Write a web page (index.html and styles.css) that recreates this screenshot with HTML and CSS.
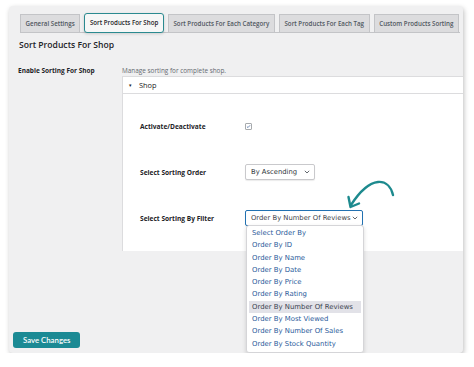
FILE: index.html
```html
<!DOCTYPE html>
<html lang="en">
<head>
    <meta charset="UTF-8">
    <meta name="viewport" content="width=device-width, initial-scale=1.0">
    <title>Sort Products For Shop</title>
    <link rel="stylesheet" href="styles.css">
</head>
<body>
    <div class="card">
        <!-- Tabs -->
        <div class="tabs">
            <a class="tab">General Settings</a>
            <a class="tab active">Sort Products For Shop</a>
            <a class="tab">Sort Products For Each Category</a>
            <a class="tab">Sort Products For Each Tag</a>
            <a class="tab">Custom Products Sorting</a>
        </div>

        <h2 class="page-title">Sort Products For Shop</h2>

        <!-- Settings row -->
        <div class="setting">
            <div class="setting-label">Enable Sorting For Shop</div>
            <div class="setting-body">
                <p class="description">Manage sorting for complete shop.</p>
                <div class="panel">
                    <div class="panel-head"><span class="caret">&#9662;</span> Shop</div>
                    <div class="panel-row row-check">
                        <div class="row-label">Activate/Deactivate</div>
                        <span class="checkbox">
                            <svg width="7" height="7" viewBox="0 0 7 7"><path d="M1.3 3.6 L2.8 5 L5.7 1.8" fill="none" stroke="#3a5f9a" stroke-width="1"/></svg>
                        </span>
                    </div>
                    <div class="panel-row">
                        <div class="row-label">Select Sorting Order</div>
                        <div class="select">By Ascending
                            <svg class="chev" width="6" height="4" viewBox="0 0 6 4"><path d="M0.8 0.8 L3 3 L5.2 0.8" fill="none" stroke="#50575e" stroke-width="0.9"/></svg>
                        </div>
                    </div>
                    <div class="panel-row">
                        <div class="row-label">Select Sorting By Filter</div>
                        <div class="select-wrap">
                            <div class="select open">Order By Number Of Reviews
                                <svg class="chev" width="6" height="4" viewBox="0 0 6 4"><path d="M0.8 0.8 L3 3 L5.2 0.8" fill="none" stroke="#50575e" stroke-width="0.9"/></svg>
                            </div>
                            <ul class="dropdown">
                                <li>Select Order By</li>
                                <li>Order By ID</li>
                                <li>Order By Name</li>
                                <li>Order By Date</li>
                                <li>Order By Price</li>
                                <li>Order By Rating</li>
                                <li class="hover">Order By Number Of Reviews</li>
                                <li>Order By Most Viewed</li>
                                <li>Order By Number Of Sales</li>
                                <li>Order By Stock Quantity</li>
                            </ul>
                        </div>
                    </div>
                </div>
            </div>
        </div>

        <div class="footer">
            <button class="save">Save Changes</button>
        </div>
    </div>

    <!-- annotation arrow -->
    <svg class="arrow" width="60" height="40" viewBox="340 175 60 40">
        <path d="M393 195 C389 178 371 174 351 205" fill="none" stroke="#1d8a8e" stroke-width="2.4" stroke-linecap="round"/>
        <path d="M348.5 197 L350.5 207 L359 203.5" fill="none" stroke="#1d8a8e" stroke-width="2.4" stroke-linecap="round" stroke-linejoin="round"/>
    </svg>
</body>
</html>
```

FILE: styles.css
```css
body {
    margin: 0;
    background: #ffffff;
    font-family: 'Open Sans', sans-serif;
    color: #1d2327;
}

/* Main card */
.card {
    margin: 6px 0 0 9px;
    width: 454px;
    height: 347px;
    background-color: #f0f0f1;
    border-radius: 4px;
    box-shadow: 1px 2px 5px rgba(0, 0, 0, 0.25);
    display: flex;
    flex-direction: column;
    overflow: hidden;
}

/* Tabs */
.tabs {
    display: flex;
    align-items: flex-end;
    margin: 7px 3px 0 11px;
    border-bottom: 1px solid #c3c4c7;
    height: 19px;
}

.tab {
    height: 17px;
    line-height: 17px;
    padding: 0 4.6px;
    margin-right: 4px;
    background-color: #dcdcde;
    border: 1px solid #c3c4c7;
    border-bottom: none;
    font-size: 6.2px;
    font-weight: 600;
    color: #50575e;
    white-space: nowrap;
}

.tab.active {
    height: 18px;
    line-height: 18px;
    background-color: #f6f7f7;
    border: 1px solid #2a8a90;
    border-radius: 3px;
    color: #1d2327;
    margin-bottom: -1px;
    box-shadow: 0 1px 3px rgba(0, 0, 0, 0.15);
}

.page-title {
    margin: 6px 0 0 10px;
    font-size: 8.6px;
    font-weight: 600;
    line-height: 12px;
}

/* Setting row */
.setting {
    display: flex;
    margin-top: 14px;
}

.setting-label {
    width: 104px;
    padding-left: 9px;
    font-size: 6.5px;
    font-weight: 700;
    line-height: 12px;
}

.setting-body {
    flex: 1;
}

.description {
    margin: 0;
    font-size: 6.4px;
    color: #646970;
    line-height: 11px;
}

.panel {
    background: #ffffff;
    border-top: 1px solid #dcdcde;
    border-left: 1px solid #dcdcde;
    height: 174px;
}

.panel-head {
    height: 16px;
    line-height: 16px;
    padding-left: 6px;
    font-size: 7.4px;
    border-bottom: 1px solid #dcdcde;
}

.caret {
    font-size: 5px;
    margin-right: 5px;
    vertical-align: 1px;
}

.panel-row {
    display: flex;
    align-items: center;
    height: 46px;
    padding-left: 17px;
}

.row-check {
    margin-top: 9px;
}

.row-label {
    width: 105px;
    font-size: 6.6px;
    font-weight: 700;
}

.checkbox {
    display: flex;
    align-items: center;
    justify-content: center;
    width: 7px;
    height: 7px;
    border: 1px solid #a7aaad;
    border-radius: 1px;
    background: #fff;
    box-sizing: border-box;
}

.select {
    display: flex;
    align-items: center;
    height: 16px;
    box-sizing: border-box;
    padding: 0 4px 0 5px;
    border: 1px solid #c9c9cc;
    border-radius: 2px;
    font-family: 'DejaVu Sans', sans-serif;
    font-size: 6.8px;
    color: #2c3338;
    background: #fff;
    box-shadow: 0 1px 1px rgba(0, 0, 0, 0.08);
    white-space: nowrap;
}

.select .chev {
    margin-left: 7px;
}

.select.open .chev {
    margin-left: 2px;
}

.select-wrap {
    position: relative;
}

.select.open {
    border-color: #2271b1;
    color: #3c434a;
}

.dropdown {
    position: absolute;
    top: 15px;
    left: 1px;
    width: 118px;
    margin: 0;
    padding: 1px 0 2px;
    list-style: none;
    background: #ffffff;
    border: 1px solid #d5d5d8;
    border-radius: 3px;
    box-shadow: 0 2px 4px rgba(0, 0, 0, 0.15);
    box-sizing: border-box;
}

.dropdown li {
    height: 12.3px;
    line-height: 12.3px;
    padding-left: 3px;
    margin: 0 2px;
    font-family: 'DejaVu Sans', sans-serif;
    font-size: 6.9px;
    color: #2a5a9a;
    white-space: nowrap;
}

.dropdown li.hover {
    background-color: #e2e2e8;
    color: #3a4350;
}

/* Footer */
.footer {
    margin-top: auto;
    padding: 0 0 5px 4px;
}

.save {
    height: 16px;
    padding: 0 10px;
    border: none;
    border-radius: 3px;
    background-color: #1b8a94;
    color: #ffffff;
    font-family: 'Lato', sans-serif;
    font-size: 7.8px;
    font-weight: 600;
}

/* annotation */
.arrow {
    position: absolute;
    left: 340px;
    top: 175px;
}
```
